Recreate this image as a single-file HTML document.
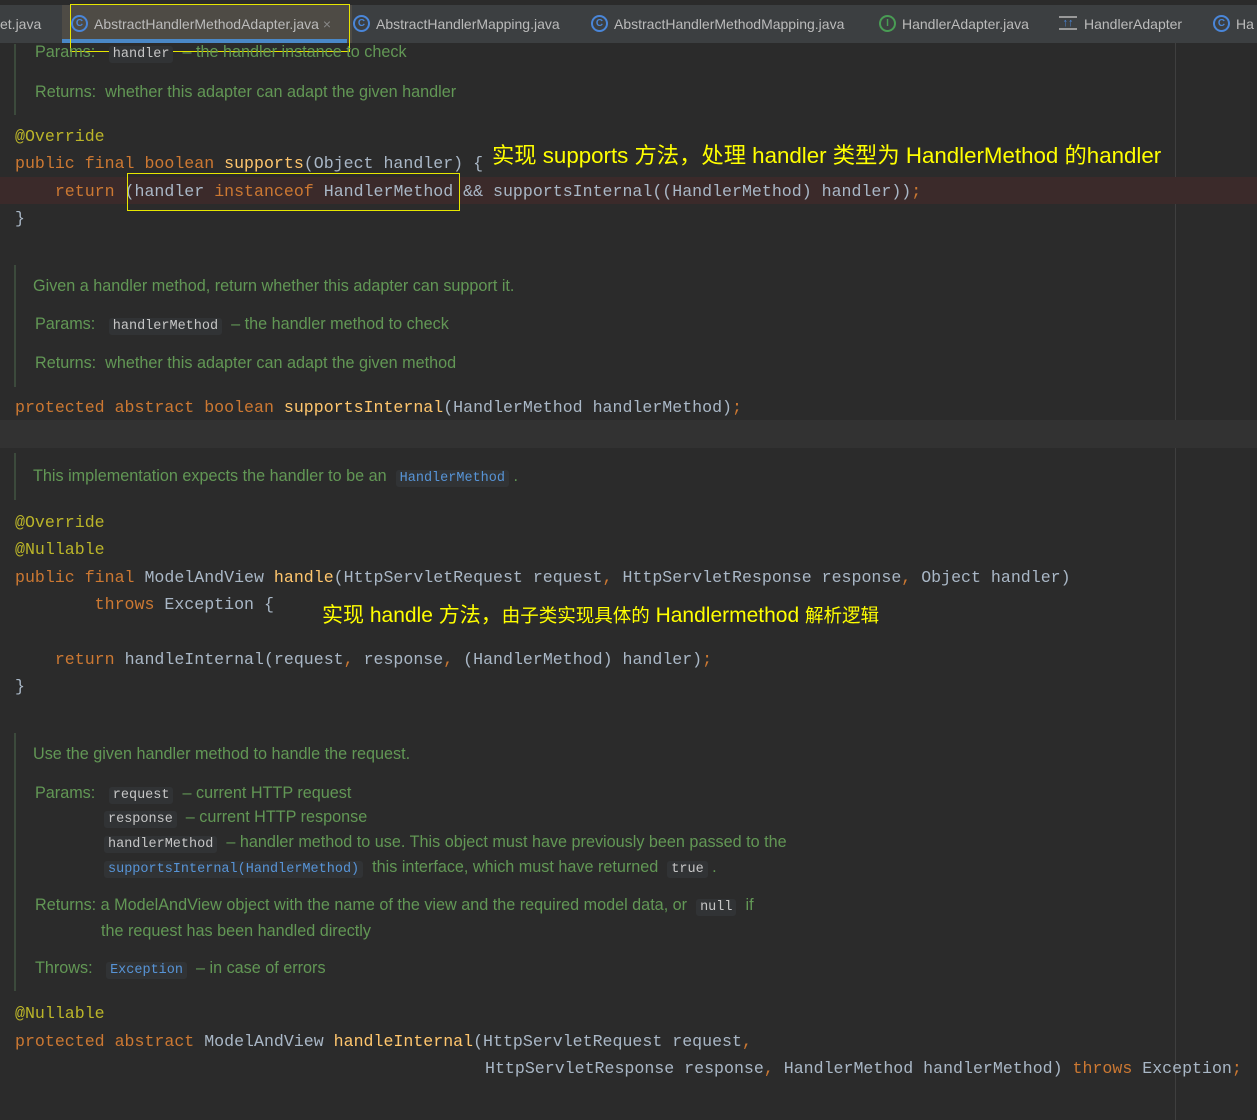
<!DOCTYPE html>
<html><head><meta charset="utf-8"><style>
body{margin:0;width:1257px;height:1120px;background:#2b2b2b;overflow:hidden;position:relative;font-family:"Liberation Sans",sans-serif}
.l{position:absolute;white-space:pre;height:27px;line-height:27px}
.c{font-family:"Liberation Mono",monospace;font-size:16.6px;color:#a9b7c6}
.d{font-family:"Liberation Sans",sans-serif;font-size:16.2px;color:#629755}
.k{color:#cc7832}.m{color:#ffc66d}.a{color:#bbb529}
.code{font-family:"Liberation Mono",monospace;font-size:13.5px;color:#c6c6c6;background:#313335;padding:1px 4px;border-radius:3px}
.lk{color:#5794d7}
.bar{position:absolute;left:14px;width:2px;background:#3c4a3c}
.ann{position:absolute;color:#ffff00;font-family:"Liberation Sans","Noto Sans CJK SC",sans-serif;font-size:22px;white-space:pre}
.tab{position:absolute;top:5px;height:38px;line-height:38px;font-size:14px;color:#bbbbbb;white-space:pre}
.ic{display:inline-block;box-sizing:border-box;width:17px;height:17px;border:2px solid #4a86d8;border-radius:50%;vertical-align:middle;position:relative;top:-2px;margin-right:6px;text-align:center;line-height:13px;font-size:10px;color:#4a86d8;font-weight:bold}
</style></head><body>
<div style="position:absolute;left:0;top:0;width:1257px;height:5px;background:#2b2b2b"></div>
<div style="position:absolute;left:0;top:5px;width:1257px;height:38px;background:#3c3f41"></div>
<div style="position:absolute;left:62px;top:5px;width:290px;height:38px;background:#4e4b45"></div>
<div style="position:absolute;left:62px;top:39px;width:285px;height:4px;background:#4a88c7"></div>
<div class="tab" style="left:0">et.java</div>
<div class="tab" style="left:71px"><span class="ic">C</span>AbstractHandlerMethodAdapter.java <span style="color:#888">×</span></div>
<div class="tab" style="left:353px"><span class="ic">C</span>AbstractHandlerMapping.java</div>
<div class="tab" style="left:591px"><span class="ic">C</span>AbstractHandlerMethodMapping.java</div>
<div class="tab" style="left:879px"><span class="ic" style="border-color:#499c54;color:#499c54">I</span>HandlerAdapter.java</div>
<div class="tab" style="left:1059px"><span style="color:#4a86d8;display:inline-block;width:18px;height:14px;box-sizing:border-box;border-top:2px solid #999;border-bottom:2px solid #999;line-height:10px;font-size:11px;margin-right:7px;vertical-align:middle;position:relative;top:-2px;text-align:center">↑↑</span>HandlerAdapter</div>
<div class="tab" style="left:1213px"><span class="ic">C</span>Ha</div>
<div style="position:absolute;left:70px;top:4px;width:280px;height:48px;border:1px solid #e6e600;box-sizing:border-box"></div>
<div style="position:absolute;left:1175px;top:43px;width:1px;height:1077px;background:#3f3f3f"></div>
<div style="position:absolute;left:0;top:177px;width:1257px;height:27px;background:#3b2a2a"></div>
<div style="position:absolute;left:0;top:420px;width:1257px;height:28px;background:#323232"></div>

<div class="bar" style="top:44px;height:71px"></div>
<div class="bar" style="top:265px;height:122px"></div>
<div class="bar" style="top:453px;height:47px"></div>
<div class="bar" style="top:733px;height:258px"></div>

<div class="l d" style="left:35px;top:39px">Params:   <span class="code">handler</span>  – the handler instance to check</div>
<div class="l d" style="left:35px;top:79px">Returns:  whether this adapter can adapt the given handler</div>
<div class="l c" style="left:15px;top:123px"><span class="a">@Override</span></div>
<div class="l c" style="left:15px;top:150px"><span class="k">public final boolean </span><span class="m">supports</span>(Object handler) {</div>
<div class="l c" style="left:15px;top:178px">    <span class="k">return </span>(handler <span class="k">instanceof </span>HandlerMethod &amp;&amp; supportsInternal((HandlerMethod) handler))<span class="k">;</span></div>
<div style="position:absolute;left:127px;top:173px;width:333px;height:38px;border:1px solid #e6e600;box-sizing:border-box"></div>
<div class="l c" style="left:15px;top:205px">}</div>
<div class="ann" style="left:492px;top:138px;font-size:22.3px">实现 supports 方法，处理 handler 类型为 HandlerMethod 的handler</div>

<div class="l d" style="left:33px;top:273px">Given a handler method, return whether this adapter can support it.</div>
<div class="l d" style="left:35px;top:311px">Params:   <span class="code">handlerMethod</span>  – the handler method to check</div>
<div class="l d" style="left:35px;top:350px">Returns:  whether this adapter can adapt the given method</div>
<div class="l c" style="left:15px;top:394px"><span class="k">protected abstract boolean </span><span class="m">supportsInternal</span>(HandlerMethod handlerMethod)<span class="k">;</span></div>

<div class="l d" style="left:33px;top:463px">This implementation expects the handler to be an  <span class="code lk">HandlerMethod</span> .</div>
<div class="l c" style="left:15px;top:509px"><span class="a">@Override</span></div>
<div class="l c" style="left:15px;top:536px"><span class="a">@Nullable</span></div>
<div class="l c" style="left:15px;top:564px"><span class="k">public final </span>ModelAndView <span class="m">handle</span>(HttpServletRequest request<span class="k">, </span>HttpServletResponse response<span class="k">, </span>Object handler)</div>
<div class="l c" style="left:15px;top:591px">        <span class="k">throws </span>Exception {</div>
<div class="ann" style="left:322px;top:599px;font-size:21px">实现 handle 方法，<span style="font-size:18.5px">由子类实现具体的</span> Handlermethod <span style="font-size:18.5px">解析逻辑</span></div>
<div class="l c" style="left:15px;top:646px">    <span class="k">return </span>handleInternal(request<span class="k">, </span>response<span class="k">, </span>(HandlerMethod) handler)<span class="k">;</span></div>
<div class="l c" style="left:15px;top:673px">}</div>

<div class="l d" style="left:33px;top:741px">Use the given handler method to handle the request.</div>
<div class="l d" style="left:35px;top:780px">Params:   <span class="code">request</span>  – current HTTP request</div>
<div class="l d" style="left:104px;top:804px"><span class="code">response</span>  – current HTTP response</div>
<div class="l d" style="left:104px;top:829px"><span class="code">handlerMethod</span>  – handler method to use. This object must have previously been passed to the</div>
<div class="l d" style="left:104px;top:854px"><span class="code lk">supportsInternal(HandlerMethod)</span>  this interface, which must have returned  <span class="code">true</span> .</div>
<div class="l d" style="left:35px;top:892px">Returns: a ModelAndView object with the name of the view and the required model data, or  <span class="code">null</span>  if</div>
<div class="l d" style="left:101px;top:918px">the request has been handled directly</div>
<div class="l d" style="left:35px;top:955px">Throws:   <span class="code lk">Exception</span>  – in case of errors</div>

<div class="l c" style="left:15px;top:1000px"><span class="a">@Nullable</span></div>
<div class="l c" style="left:15px;top:1028px"><span class="k">protected abstract </span>ModelAndView <span class="m">handleInternal</span>(HttpServletRequest request<span class="k">,</span></div>
<div class="l c" style="left:485px;top:1055px">HttpServletResponse response<span class="k">, </span>HandlerMethod handlerMethod) <span class="k">throws </span>Exception<span class="k">;</span></div>
</body></html>
